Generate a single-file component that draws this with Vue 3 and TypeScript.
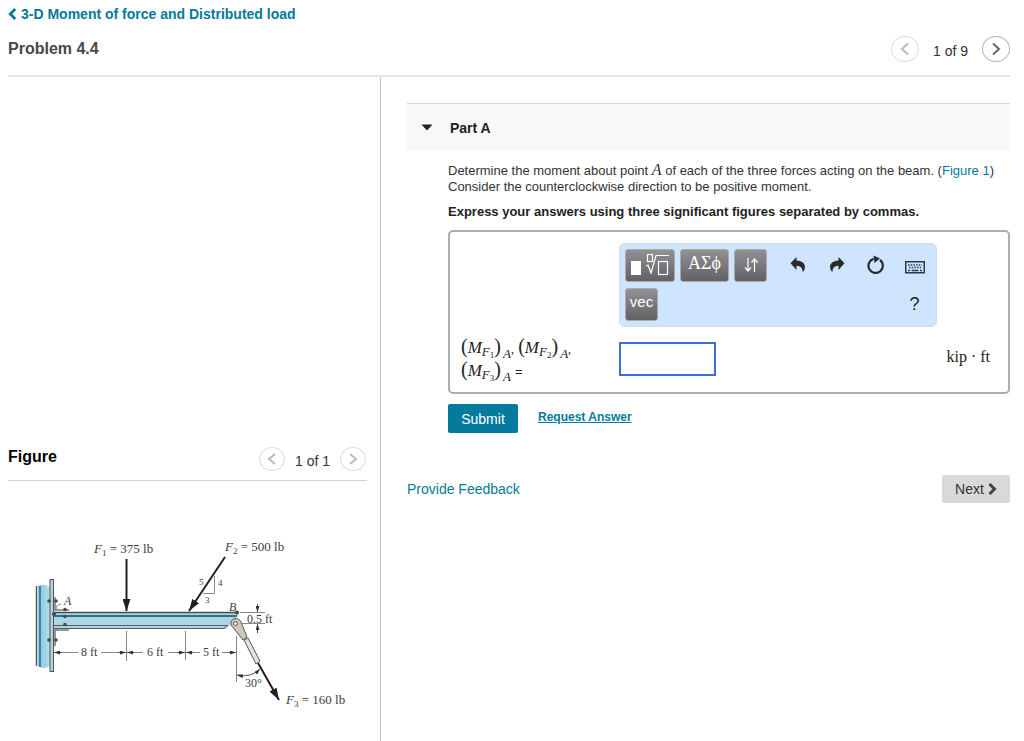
<script setup lang="ts">
import { ref } from 'vue'

const answer = ref('')
const expanded = ref(true)
const moments = [
  { index: 1, after: ',' },
  { index: 2, after: ',' },
  { index: 3, after: '=' },
]
</script>

<template>
  <div class="page">
    <header class="top">
      <a class="back" href="#assignment">
        <svg width="9" height="12" viewBox="0 0 9 12"><path d="M7.200 1 2.300 6l4.900 5" fill="none" stroke="currentColor" stroke-width="2.800" /></svg>
        <span>3-D Moment of force and Distributed load</span>
      </a>
      <div class="title-row">
        <h1>Problem 4.4</h1>
        <nav class="pager" aria-label="Problems">
          <button class="round" disabled aria-label="Previous problem">
            <svg width="10" height="14" viewBox="0 0 10 14"><path d="m8 1.500-6 5.500 6 5.500" /></svg>
          </button>
          <span class="count">1 of 9</span>
          <button class="round" aria-label="Next problem">
            <svg width="10" height="14" viewBox="0 0 10 14"><path d="m2 1.500 6 5.500-6 5.500" /></svg>
          </button>
        </nav>
      </div>
    </header>

    <div class="workspace">
      <aside class="left">
        <div class="figure-head">
          <h2>Figure</h2>
          <nav class="pager small" aria-label="Figures">
            <button class="round" disabled aria-label="Previous figure">
              <svg width="10" height="14" viewBox="0 0 10 14"><path d="m8 2-6 5 6 5" /></svg>
            </button>
            <span class="count">1 of 1</span>
            <button class="round" disabled aria-label="Next figure">
              <svg width="10" height="14" viewBox="0 0 10 14"><path d="m2 2 6 5-6 5" /></svg>
            </button>
          </nav>
        </div>
        <svg class="beam" width="359" height="190" viewBox="8 530 359 190" role="img" aria-label="Beam with three forces">
          <defs>
            <linearGradient id="wall" x1="0" x2="1" y1="0" y2="0">
              <stop offset="0" stop-color="#8cc4dc" /><stop offset="1" stop-color="#b4dcec" />
            </linearGradient>
            <marker id="big" viewBox="0 0 12 8" refX="12" refY="4" markerWidth="12" markerHeight="8" markerUnits="userSpaceOnUse" orient="auto"><path d="M0 0 12 4 0 8Z" fill="#231f20" /></marker>
            <marker id="tiny" viewBox="0 0 6 4" refX="6" refY="2" markerWidth="6" markerHeight="4" markerUnits="userSpaceOnUse" orient="auto-start-reverse"><path d="M0 0 6 2 0 4Z" fill="#333" /></marker>
          </defs>

          <!-- wall column and end plate -->
          <path d="M36.500 586V666" stroke="#555" stroke-width="1.500" />
          <path d="M38 586Q44 583 50 587V666Q44 670 38 666Z" fill="url(#wall)" />
          <path d="M40 586V667" stroke="#328ba8" stroke-width="2" />
          <rect x="50" y="579.500" width="3.500" height="92" fill="#b4d2df" stroke="#555" />

          <!-- beam -->
          <path d="M54 612H238V616L226 629H54Z" fill="#add5e5" />
          <path d="M54 612.500H238" stroke="#4c4c4c" stroke-width="1.300" />
          <path d="M54 616H237" stroke="#257788" stroke-width="2" />
          <path d="M54 625.500H228M54 628.500H224L228 625" stroke="#565d62" fill="none" />
          <path d="M55 597V610H69M55 646V630H69" fill="none" stroke="#777" stroke-width="1.500" />
          <path d="M57 609Q55 605 61 604" fill="none" stroke="#888" />
          <g fill="#48494c">
            <circle cx="49" cy="601" r="1.800" /><circle cx="56" cy="601" r="1.800" />
            <circle cx="49" cy="640" r="1.800" /><circle cx="56" cy="640" r="1.800" />
            <circle cx="65" cy="609.500" r="1.800" /><circle cx="65" cy="616.500" r="1.800" />
            <circle cx="65" cy="624.500" r="1.800" />
            <circle cx="54" cy="614" r="2" /><circle cx="237" cy="612.500" r="2" />
          </g>

          <!-- dimensions -->
          <g fill="none" stroke="#888" stroke-width="1">
            <path d="M126.500 631V661M185.500 631V660M236.500 636V682M240 612.500H265M240 623.500H265" />
            <path d="M54 652.500H78M101 652.500H126M127 652.500H143M168 652.500H185M186 652.500H200M222 652.500H236" />
            <path d="M203 593.500H214.500V576" />
          </g>
          <g fill="none" stroke="#555" stroke-width="1">
            <path d="M62 652.500H54" marker-end="url(#tiny)" />
            <path d="M118 652.500H126" marker-end="url(#tiny)" />
            <path d="M134 652.500H127" marker-end="url(#tiny)" />
            <path d="M177 652.500H185" marker-end="url(#tiny)" />
            <path d="M193 652.500H186" marker-end="url(#tiny)" />
            <path d="M228 652.500H236" marker-end="url(#tiny)" />
            <path d="M257.500 604V612" marker-end="url(#tiny)" />
            <path d="M257.500 633V624" marker-end="url(#tiny)" />
            <path d="M237 675Q251 678 260 669" marker-start="url(#tiny)" marker-end="url(#tiny)" />
          </g>

          <!-- bar and forces -->
          <path d="m244 640 4-2 12 23-4 3Z" fill="#e2e2de" stroke="#555" />
          <path d="M231 625C230 617 239 617 241 622L247 637 243 640Z" fill="#cfc9b9" stroke="#555" />
          <circle cx="235.500" cy="623.500" r="2" fill="#eee" stroke="#555" />
          <g fill="none" stroke="#231f20" stroke-width="2">
            <path d="M126.500 559V611" marker-end="url(#big)" />
            <path d="M225 557 189 611" marker-end="url(#big)" />
            <path d="m258 663 21 37" marker-end="url(#big)" />
          </g>

          <g class="beam-text">
            <g class="force">
              <text x="94" y="553"><tspan class="it">F</tspan><tspan class="tiny-text" dy="3">1</tspan><tspan dy="-3"> = 375 lb</tspan></text>
              <text x="225" y="551"><tspan class="it">F</tspan><tspan class="tiny-text" dy="3">2</tspan><tspan dy="-3"> = 500 lb</tspan></text>
              <text x="286" y="704"><tspan class="it">F</tspan><tspan class="tiny-text" dy="3">3</tspan><tspan dy="-3"> = 160 lb</tspan></text>
            </g>
            <text class="it" x="64" y="605">A</text>
            <text class="it" x="229" y="611">B</text>
            <text x="81" y="656">8 ft</text>
            <text x="147" y="656">6 ft</text>
            <text x="203" y="656">5 ft</text>
            <text x="247" y="623">0.5 ft</text>
            <text x="245" y="687">30°</text>
            <text class="tiny-text" x="199" y="585">5</text>
            <text class="tiny-text" x="218" y="586">4</text>
            <text class="tiny-text" x="205" y="603">3</text>
          </g>
        </svg>
      </aside>

      <main class="right">
        <h2 class="part-head">
          <button class="toggle" :aria-expanded="expanded" @click="expanded = !expanded">
            <svg width="12" height="7" viewBox="0 0 12 7"><path d="M0.500 0.500h11L6 6.500Z" fill="#222" /></svg>
            <span>Part A</span>
          </button>
        </h2>

        <section v-show="expanded" class="part-body">
          <p>
            Determine the moment about point <i class="point">A</i> of each of the three forces acting on the beam.
            (<a href="#figure">Figure 1</a>)<br />
            Consider the counterclockwise direction to be positive moment.
          </p>
          <p class="strong">Express your answers using three significant figures separated by commas.</p>

          <form @submit.prevent>
            <div class="answer-box">
              <div class="toolbar">
                <div class="keys">
                  <button type="button" class="key wide" aria-label="Templates">
                    <svg width="38" height="24" viewBox="0 0 38 24">
                      <rect x="0" y="8" width="10" height="14" fill="#fff" />
                      <g fill="none" stroke="#fff" stroke-width="1.200">
                        <rect x="16.500" y="1.500" width="5" height="7" />
                        <path d="m15 13 2-1 3 8 5-17.500h13" />
                        <rect x="27.500" y="8.500" width="9" height="13" />
                      </g>
                    </svg>
                  </button>
                  <button type="button" class="key greek">ΑΣϕ</button>
                  <button type="button" class="key" aria-label="Arrows">
                    <svg width="16" height="18" viewBox="0 0 16 18"><path d="M5 2v13M2 11.500 5 15l3-3.500M11.500 16V3M8.500 6.500l3-3.500 3 3.500" fill="none" stroke="#fff" stroke-width="1.200" /></svg>
                  </button>
                  <button type="button" class="key vec">vec</button>
                </div>
                <div class="tools">
                  <button type="button" class="tool" aria-label="Undo">
                    <svg width="16" height="16" viewBox="0 0 16 16"><path d="M6.500 0v3.500C12 3.800 15 6.500 15 10q0 3-2.500 5.500 .500-6.500-6-6.800V13L0.500 6.300Z" /></svg>
                  </button>
                  <button type="button" class="tool" aria-label="Redo">
                    <svg width="16" height="16" viewBox="0 0 16 16"><path d="M9.500 0v3.500C4 3.800 1 6.500 1 10q0 3 2.500 5.500-.500-6.500 6-6.800V13l6-6.700Z" /></svg>
                  </button>
                  <button type="button" class="tool" aria-label="Reset">
                    <svg width="18" height="20" viewBox="0 0 18 20"><path d="M13 5A7.200 7.200 0 1 1 6.500 3.900" fill="none" stroke="#2b2b2b" stroke-width="2.200" /><path d="m6.500 0.500 6.500 3-5.500 4.500Z" /></svg>
                  </button>
                  <button type="button" class="tool" aria-label="Keyboard">
                    <svg class="keyboard" width="20" height="14" viewBox="0 0 20 14"><rect x="0.750" y="1.750" width="18.500" height="11" fill="none" stroke="#2b3a48" stroke-width="1.500" /><path d="M3 5h14M4 7.500h12" stroke="#2b3a48" stroke-width="1.500" stroke-dasharray="1.500 1.200" /><path d="M3 10.500h2M6.500 10.500h7M15 10.500h2" stroke="#2b3a48" stroke-width="1.500" /></svg>
                  </button>
                  <button type="button" class="tool help">?</button>
                </div>
              </div>
              <label class="math" for="moments">
                <template v-for="m in moments" :key="m.index">
                  <span class="term"><span class="paren">(</span><i>M</i><span class="sub"><i>F</i><span class="subsub">{{ m.index }}</span></span><span class="paren">)</span><i class="sub-a">A</i><span :class="m.after === '=' ? 'equals' : 'comma'">{{ m.after }}</span></span>{{ ' ' }}
                </template>
              </label>
              <input id="moments" v-model="answer" class="entry" type="text" autocomplete="off" />
              <span class="unit">kip · ft</span>
            </div>

            <div class="actions">
              <button class="submit" type="submit">Submit</button>
              <a class="request" href="#answer">Request Answer</a>
            </div>
          </form>
        </section>

        <footer class="foot">
          <a href="#feedback">Provide Feedback</a>
          <button class="next">
            Next
            <svg width="9" height="12" viewBox="0 0 9 12"><path d="m1.500 1 5 5-5 5" fill="none" stroke="#444" stroke-width="3" /></svg>
          </button>
        </footer>
      </main>
    </div>
  </div>
</template>

<style>
body {
  background: #fff;
}
</style>

<style scoped>
.page {
  display: flex;
  flex-direction: column;
  min-height: 100vh;
  color: #333;
  font: 14px/16px "Liberation Sans", Arial, sans-serif;
}
*,
*::before {
  box-sizing: border-box;
}
h1,
h2,
p {
  margin: 0;
}
a {
  color: #047a9c;
  text-decoration: none;
}
button {
  padding: 0;
  color: inherit;
  font: inherit;
  border: 0;
  cursor: pointer;
}
svg {
  display: block;
}

.top {
  margin: 0 14px 0 8px;
  padding-top: 6px;
  border-bottom: 2px solid #e5e5e5;
}
.back {
  display: flex;
  align-items: center;
  gap: 4px;
  font-weight: bold;
}
.title-row {
  display: flex;
  justify-content: space-between;
  align-items: flex-start;
  height: 53px;
  padding-top: 14px;
}
h1 {
  padding-top: 3px;
  color: #484848;
  font-size: 16px;
  line-height: 20px;
}
.pager {
  display: flex;
  align-items: center;
  gap: 14px;
}
.pager.small {
  gap: 10px;
  padding-right: 1px;
}
.count {
  padding-top: 4px;
}
.round {
  display: grid;
  place-items: center;
  width: 28px;
  height: 26px;
  background: #fff;
  border: 1px solid #b5b5b5;
  border-radius: 50%;
}
.small .round {
  width: 26px;
  height: 24px;
}
.round path {
  fill: none;
  stroke: #666;
  stroke-width: 2;
}
.round:disabled {
  border-color: #dedede;
}
.round:disabled path {
  stroke: #bbb;
}

.workspace {
  display: grid;
  flex: 1;
  grid-template-columns: 381px 1fr;
}
.left {
  padding: 370px 13px 0 8px;
  border-right: 1px solid #b4c6d6;
}
.figure-head {
  display: flex;
  justify-content: space-between;
  align-items: flex-start;
  height: 34px;
  border-bottom: 1px solid #d3d3d3;
}
.figure-head h2 {
  color: #000;
  font-size: 16px;
  line-height: 20px;
}
.beam {
  margin-top: 49px;
  max-width: 100%;
}
.beam-text {
  fill: #3c3c3e;
  font: 12px "Liberation Serif", serif;
}
.force {
  font-size: 13px;
}
.it {
  font-style: italic;
}
.tiny-text {
  font-size: 9px;
}

.right {
  padding: 26px 14px 0 26px;
}
.part-head {
  background: #f8f8f8;
  border-top: 1px solid #d6d6d6;
}
.toggle {
  display: flex;
  align-items: center;
  gap: 17px;
  width: 100%;
  height: 47px;
  padding-left: 14px;
  color: #222;
  font-size: 14px;
  font-weight: bold;
  background: none;
}
.part-body {
  padding: 11px 0 0 41px;
  font-size: 13px;
}
.point {
  font: italic 16px/1 "Liberation Serif", serif;
}
.strong {
  margin-top: 9px;
  color: #222;
  font-weight: bold;
}
.answer-box {
  display: grid;
  grid-template-columns: 158px 97px 1fr;
  row-gap: 8px;
  align-items: center;
  min-height: 164px;
  margin-top: 10px;
  padding: 10px 18px 10px 11px;
  border: 2px solid #adadad;
  border-radius: 5px;
}
.toolbar {
  display: flex;
  grid-column: 2 / 4;
  justify-content: space-between;
  width: 318px;
  padding: 5px 2px 5px 5px;
  background: #cfe5ff;
  border: 1px solid #d6dae0;
  border-radius: 6px;
}
.keys {
  display: flex;
  flex-wrap: wrap;
  gap: 6px 5px;
  width: 144px;
}
.key {
  display: grid;
  place-items: center;
  width: 33px;
  height: 33px;
  color: #fff;
  font-size: 14px;
  background: linear-gradient(#919196, #626264);
  border: 1px solid #aaa;
  border-radius: 3px;
}
.key.wide {
  width: 50px;
}
.key.greek {
  width: 49px;
  padding-bottom: 4px;
  font: 18px/20px "Liberation Serif", serif;
}
.key.vec {
  padding-bottom: 4px;
  font-size: 15px;
}
.tools {
  display: grid;
  grid-template-columns: repeat(4, 39px);
  grid-template-rows: 33px 33px;
  row-gap: 6px;
}
.tool {
  display: grid;
  place-items: center;
  color: #222;
  background: none;
}
.tool path {
  fill: #2b2b2b;
}
.tool path[fill="none"] {
  fill: none;
}
.keyboard {
  margin-top: 4px;
}
.help {
  grid-column: 4;
  font-size: 18px;
}
.math {
  color: #222;
  font: 17px/22px "Liberation Serif", serif;
}
.term {
  display: inline-block;
  height: 22px;
  white-space: nowrap;
}
.paren {
  font-size: 20px;
  line-height: 1;
}
.sub {
  font-size: 13px;
  line-height: 1;
  vertical-align: -3px;
}
.subsub {
  font-size: 9px;
  vertical-align: -2px;
}
.sub-a {
  margin-left: 2px;
  font-size: 13px;
  line-height: 1;
  vertical-align: -5px;
}
.comma {
  font-size: 12px;
}
.equals {
  margin-left: 4px;
  font: 13px/1 "Liberation Sans", sans-serif;
}
.entry {
  width: 97px;
  height: 34px;
  padding: 4px;
  font: inherit;
  background: #fff;
  border: 2px solid #3d6fce;
  outline: none;
}
.unit {
  justify-self: end;
  padding-bottom: 4px;
  color: #222;
  font: 16px/20px "Liberation Serif", serif;
}
.actions {
  display: flex;
  align-items: center;
  gap: 20px;
  margin-top: 10px;
}
.submit {
  width: 70px;
  height: 29px;
  color: #fff;
  font-size: 14px;
  background: #047a9c;
  border-radius: 2px;
}
.request {
  padding-bottom: 3px;
  font-size: 12px;
  font-weight: bold;
  text-decoration: underline;
}
.foot {
  display: flex;
  justify-content: space-between;
  align-items: center;
  margin-top: 42px;
}
.next {
  display: flex;
  align-items: center;
  justify-content: center;
  gap: 4px;
  width: 68px;
  height: 28px;
  background: #d9d9d9;
  border-radius: 2px;
}
</style>
